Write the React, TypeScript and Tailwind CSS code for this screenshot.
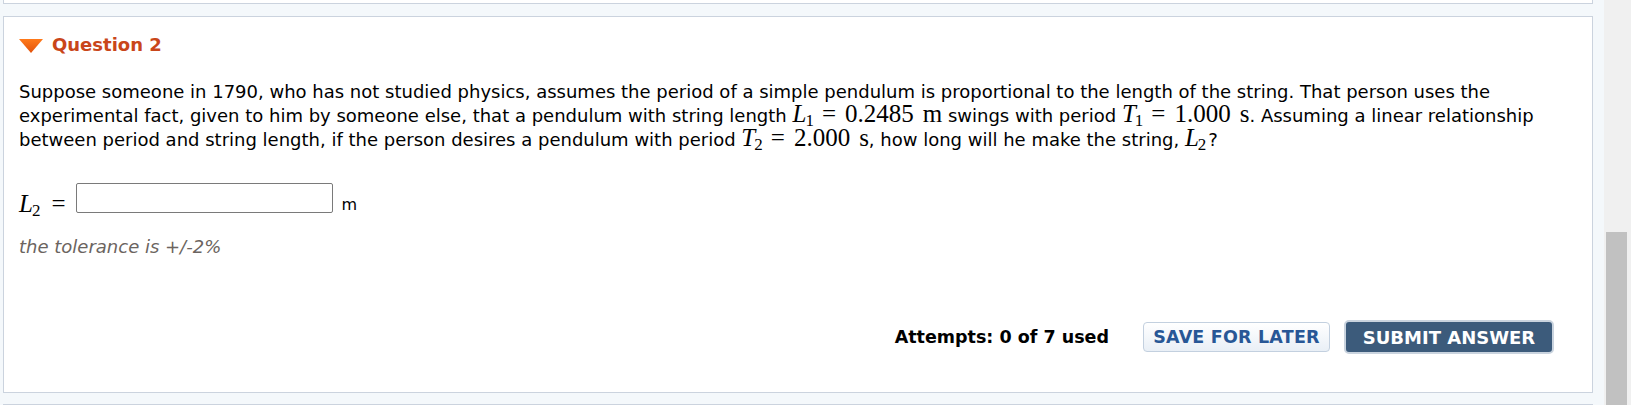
import React from "react";

const sans = { fontFamily: '"DejaVu Sans", Verdana, sans-serif' };

function MathVar({ v, sub }: { v: string; sub?: string }) {
  return (
    <span className="font-['Liberation_Serif',serif] text-[25px] leading-[0]">
      <i>{v}</i>
      {sub && <span className="text-[17px] relative top-[4px] ml-[-1px]">{sub}</span>}
    </span>
  );
}

function MathEq({ v, sub, value, unit }: { v: string; sub: string; value: string; unit: string }) {
  return (
    <span className="font-['Liberation_Serif',serif] text-[25px] leading-[0] whitespace-nowrap">
      <MathVar v={v} sub={sub} />
      <span className="ml-[8px] mr-[9px]">=</span>
      {value}
      <span className="ml-[9px]">{unit}</span>
    </span>
  );
}

function QuestionCard() {
  return (
    <div className="h-[377px] border border-[#cbd3de] bg-white px-[15px] pt-[16px] text-black" style={sans}>
      {/* header */}
      <div className="flex items-center leading-[24px]">
        <svg width="24" height="14" viewBox="0 0 24 14" className="mr-[9px] mt-[2px]">
          <defs>
            <linearGradient id="tri" x1="0" y1="0" x2="0" y2="1">
              <stop offset="0" stopColor="#ff7a1a" />
              <stop offset="1" stopColor="#e2520c" />
            </linearGradient>
          </defs>
          <polygon points="0,0 24,0 12,14" fill="url(#tri)" />
        </svg>
        <span className="text-[18px] font-bold text-[#c9461a]">Question 2</span>
      </div>

      {/* body */}
      <p className="mt-[23px] text-[18px] leading-[24px] whitespace-nowrap">
        Suppose someone in 1790, who has not studied physics, assumes the period of a simple pendulum is
        proportional to the length of the string. That person uses the
        <br />
        experimental fact, given to him by someone else, that a pendulum with string length{" "}
        <MathEq v="L" sub="1" value="0.2485" unit="m" /> swings with period{" "}
        <MathEq v="T" sub="1" value="1.000" unit="s" />. Assuming a linear relationship
        <br />
        between period and string length, if the person desires a pendulum with period{" "}
        <MathEq v="T" sub="2" value="2.000" unit="s" />, how long will he make the string,{" "}
        <MathVar v="L" sub="2" />
        <span className="ml-[2px]">?</span>
      </p>

      {/* answer */}
      <div className="mt-[31px] flex items-end">
        <span className="mb-[-3px] font-['Liberation_Serif',serif] text-[25px] leading-none">
          <i>L</i>
          <span className="text-[17px] relative top-[4px] ml-[-1px]">2</span>
          <span className="ml-[11px]">=</span>
        </span>
        <input
          type="text"
          className="ml-[10px] h-[30px] w-[257px] rounded-[2px] border border-[#7a7a7a] bg-white outline-none"
        />
        <span className="ml-[9px] text-[16px] leading-none">m</span>
      </div>

      <div className="mt-[22px] text-[18px] italic leading-[24px] text-[#6b6460]">the tolerance is +/-2%</div>

      {/* actions */}
      <div className="mt-[61px] mr-[23px] flex items-center justify-end">
        <span className="text-[17.5px] font-bold">Attempts: 0 of 7 used</span>
        <button className="ml-[34px] h-[30px] w-[187px] rounded-[4px] border border-[#c3d0df] bg-gradient-to-b from-white to-[#e9eff6] text-[17.5px] font-bold tracking-[0.2px] text-[#285796]">
          SAVE FOR LATER
        </button>
        <button className="ml-[14px] h-[34px] w-[210px] rounded-[5px] border-2 border-[#c9d3de] bg-[#3c5b7b] text-[18px] font-bold text-white">
          SUBMIT ANSWER
        </button>
      </div>
    </div>
  );
}

export default function App() {
  return (
    <div className="flex h-[405px] w-full overflow-hidden bg-[#f4f8fb]">
      <div className="flex-1 pl-[3px] pr-[11px]">
        <div className="h-[4px] border-x border-b border-[#cbd3de] bg-white" />
        <div className="mt-[12px]">
          <QuestionCard />
        </div>
        <div className="mt-[11px] h-[20px] border border-[#cbd3de] bg-white" />
      </div>
      {/* scrollbar */}
      <div className="w-[27px] bg-[#f0f0f0] pt-[232px] pl-[2px]">
        <div className="h-full w-[21px] bg-[#c1c1c1]" />
      </div>
    </div>
  );
}
